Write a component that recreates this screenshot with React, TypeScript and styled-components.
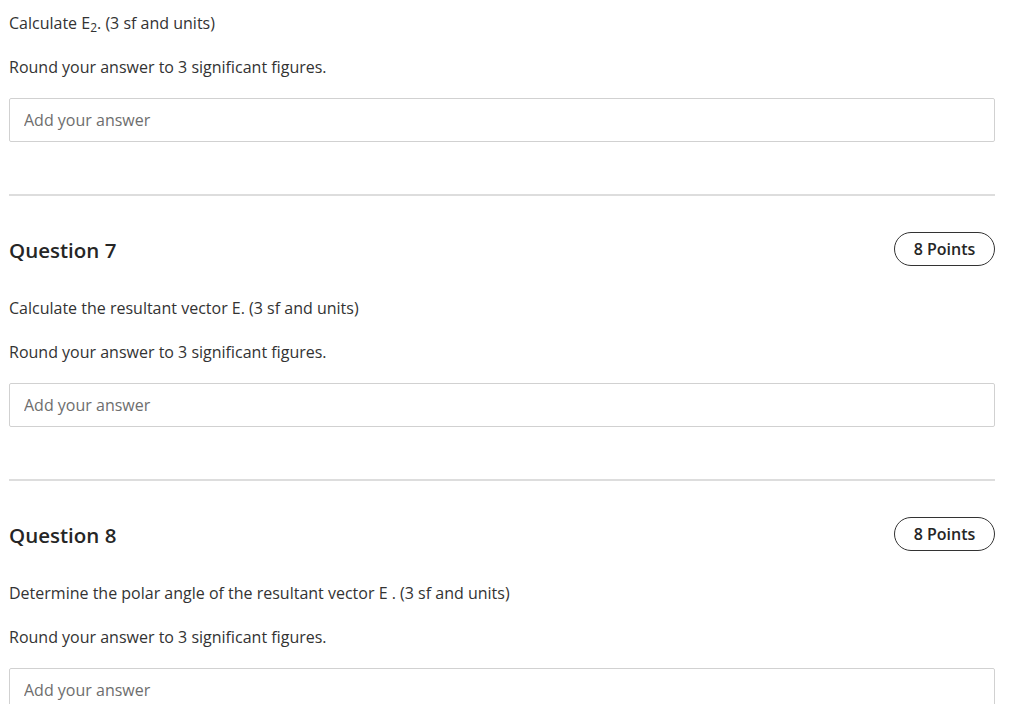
import React from "react";
import styled, { createGlobalStyle } from "styled-components";

const GlobalStyle = createGlobalStyle`
  body {
    margin: 0;
    background: #ffffff;
    font-family: "Open Sans", "Liberation Sans", sans-serif;
    color: #333333;
  }
`;

const Page = styled.div`
  width: 986px;
  padding: 0 0 0 9px;
  overflow: hidden;
  height: 704px;
`;

const Section = styled.section<{ $first: boolean }>`
  display: flex;
  flex-direction: column;
  padding-top: ${(p) => (p.$first ? "12px" : "0")};
`;

const Header = styled.div`
  display: flex;
  align-items: center;
  justify-content: space-between;
  height: 34px;
  margin: 36px 0 31px;
`;

const Title = styled.h2`
  margin: 0;
  padding-top: 2px;
  font-size: 20.5px;
  font-weight: 600;
  color: #262626;
`;

const Points = styled.span`
  display: inline-flex;
  align-items: center;
  justify-content: center;
  box-sizing: border-box;
  height: 34px;
  width: 101px;
  border: 1px solid #333333;
  border-radius: 17px;
  font-size: 16px;
  font-weight: 600;
  color: #262626;
`;

const Prompt = styled.p`
  margin: 0 0 22px;
  font-size: 16px;
  line-height: 22px;
  color: #333333;
`;

const Sub = styled.sub`
  font-size: 12px;
  vertical-align: -3px;
  line-height: 0;
`;

const AnswerInput = styled.input`
  box-sizing: border-box;
  margin-top: -2px;
  width: 100%;
  height: 44px;
  padding: 0 14px;
  border: 1px solid #d1d1d1;
  border-radius: 2px;
  font-family: "Open Sans", "Liberation Sans", sans-serif;
  font-size: 16px;
  color: #333333;
  outline: none;

  &::placeholder {
    color: #6e6e6e;
  }
`;

const Divider = styled.hr`
  margin: 52px 0 0;
  border: none;
  border-top: 2px solid #dddddd;
  height: 0;
`;

type Question = {
  number?: number;
  points?: number;
  prompt: React.ReactNode;
};

const questions: Question[] = [
  {
    prompt: (
      <>
        Calculate E<Sub>2</Sub>. (3 sf and units)
      </>
    ),
  },
  { number: 7, points: 8, prompt: "Calculate the resultant vector E. (3 sf and units)" },
  {
    number: 8,
    points: 8,
    prompt: "Determine the polar angle of the resultant vector E . (3 sf and units)",
  },
];

const App = () => {
  return (
    <Page>
      <GlobalStyle />
      {questions.map((q, i) => (
        <Section key={i} $first={i === 0}>
          {q.number && (
            <Header>
              <Title>Question {q.number}</Title>
              <Points>{q.points} Points</Points>
            </Header>
          )}
          <Prompt>{q.prompt}</Prompt>
          <Prompt>Round your answer to 3 significant figures.</Prompt>
          <AnswerInput placeholder="Add your answer" />
          {i < questions.length - 1 && <Divider />}
        </Section>
      ))}
    </Page>
  );
};

export default App;
